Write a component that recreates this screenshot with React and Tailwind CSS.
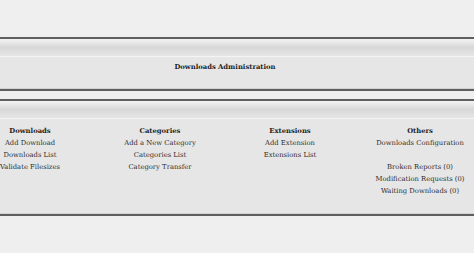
const COLUMNS = [
  { title: 'Downloads', items: ['Add Download', 'Downloads List', 'Validate Filesizes'] },
  { title: 'Categories', items: ['Add a New Category', 'Categories List', 'Category Transfer'] },
  { title: 'Extensions', items: ['Add Extension', 'Extensions List'] },
  {
    title: 'Others',
    items: ['Downloads Configuration', '', 'Broken Reports (0)', 'Modification Requests (0)', 'Waiting Downloads (0)'],
  },
];

function PanelHead() {
  return (
    <div className="border-t-2 border-[#5f5f5f]">
      <div className="h-[18px] bg-linear-to-b from-[#f3f3f3] via-[#d8d8d8] to-[#e6e6e6] border-b border-[#f4f4f4]" />
    </div>
  );
}

function PanelFoot() {
  return <div className="border-t border-[#d2d2d2] border-b-2 border-b-[#5f5f5f] h-[3px] bg-[#dcdcdc]" />;
}

export default function App() {
  return (
    <div
      className="min-h-[253px] w-[474px] overflow-hidden bg-[#efefef] text-[#2e2e2e] pt-[37px]"
      style={{ fontFamily: '"DejaVu Serif", serif' }}
    >
      <div className="-ml-[35px] w-[520px]">
        <div>
          <PanelHead />
          <div className="bg-[#e6e6e6] h-[31px] pt-[4px] text-center text-[6.8px] leading-[12px] font-bold text-[#1e1e1e]">
            Downloads Administration
          </div>
          <PanelFoot />
        </div>

        <div className="h-[8px]" />

        <div>
          <PanelHead />
          <div className="bg-[#e6e6e6] h-[94px] pt-[6px] overflow-hidden">
            <div className="grid grid-cols-4">
              {COLUMNS.map(col => (
                <div key={col.title} className="flex flex-col items-center text-[6.8px] leading-[12px] whitespace-nowrap">
                  <span className="font-bold text-[#1e1e1e]">{col.title}</span>
                  {col.items.map((it, i) => (
                    <span key={i} className="h-[12px]">{it}</span>
                  ))}
                </div>
              ))}
            </div>
          </div>
          <PanelFoot />
        </div>
      </div>
    </div>
  );
}
